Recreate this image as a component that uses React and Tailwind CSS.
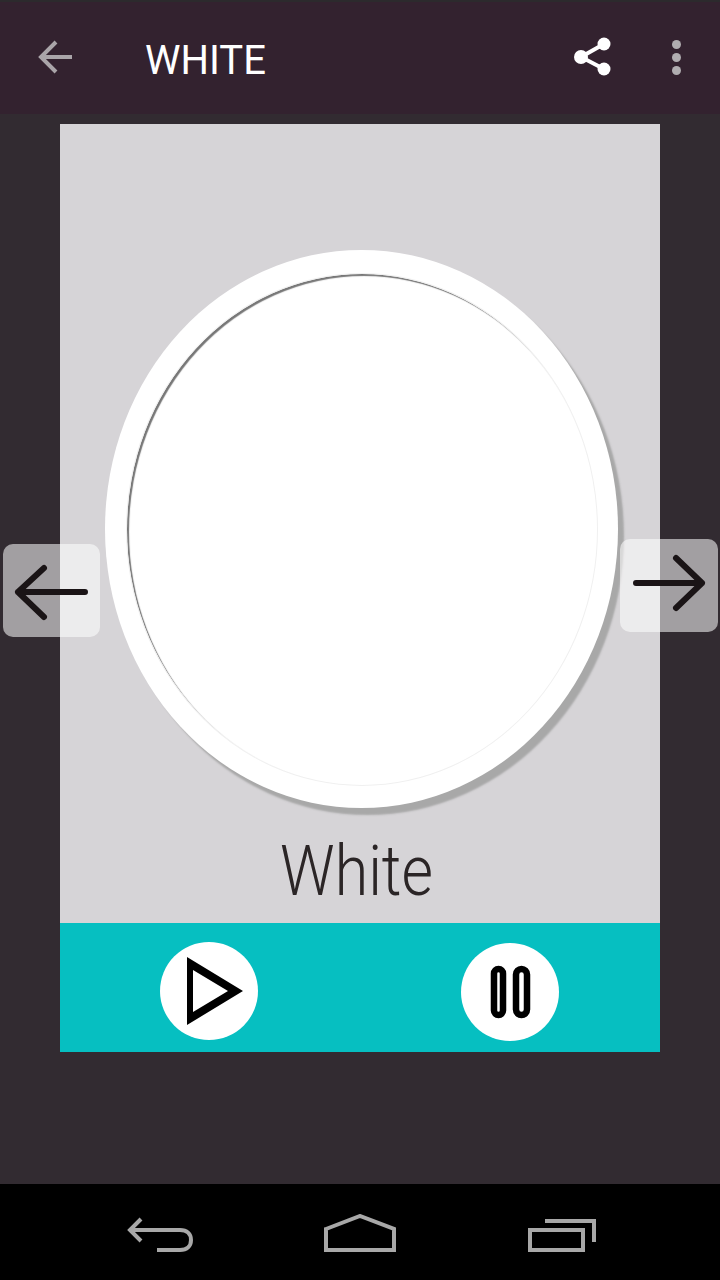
export default function App() {
  return (
    <div className="relative flex h-[1280px] w-[720px] flex-col overflow-hidden bg-[#322b31] font-['Roboto',sans-serif]">
      {/* Action bar */}
      <header className="flex h-[114px] shrink-0 items-center border-t-2 border-[#2c2a2d] bg-[#33222f] pl-[38px] pr-[39px]">
        <svg width="36" height="36" viewBox="0 0 36 36" fill="none" stroke="#aaa5a9" strokeWidth="4" className="mt-[-2px]">
          <path d="M34 18H5M18 3L3 18l15 15" />
        </svg>
        <h1 className="ml-[71px] mt-[5px] flex-1 text-[40px] font-normal leading-none text-white">WHITE</h1>
        <svg width="40" height="42" viewBox="0 0 40 42" fill="white" className="mr-[58px] mt-[-2px]">
          <path d="M30 8L7 21l23 12" fill="none" stroke="white" strokeWidth="4" />
          <circle cx="30" cy="8" r="6.5" />
          <circle cx="7" cy="21" r="7" />
          <circle cx="30" cy="33" r="6.5" />
        </svg>
        <div className="mt-[-2px] flex flex-col gap-[4px]">
          <span className="h-[9px] w-[9px] rounded-full bg-[#b0adb0]" />
          <span className="h-[9px] w-[9px] rounded-full bg-[#b0adb0]" />
          <span className="h-[9px] w-[9px] rounded-full bg-[#b0adb0]" />
        </div>
      </header>

      {/* Colour card */}
      <main className="relative flex-1 pt-[10px]">
        <div className="mx-auto flex h-[928px] w-[600px] flex-col bg-[#d6d4d7]">
          <div className="flex-1 pl-[45px] pt-[126px]">
            <div className="h-[558px] w-[513px] rounded-[50%] bg-white pl-[21px] pt-[23px] shadow-[6px_7px_2px_#a8a8a8]">
              <div className="h-[513px] w-[472px] rounded-[50%] border border-[#f0f0f0] shadow-[inset_2px_2px_1px_#777777]" />
            </div>
            <p className="ml-[-52px] mt-[28px] scale-x-[0.87] text-center text-[70px] font-light leading-none text-[#2b2526]">White</p>
          </div>
          <div className="flex h-[129px] items-center bg-[#06bfc1] pl-[100px] pt-[7px]">
            <button className="h-[98px] w-[98px] rounded-full bg-white">
              <svg width="98" height="98" viewBox="0 0 98 98">
                <path fillRule="evenodd" d="M27 15L83 49 27 83ZM33 28V70L68 49Z" fill="#000" />
              </svg>
            </button>
            <button className="ml-[203px] mt-[2px] h-[98px] w-[98px] rounded-full bg-white">
              <svg width="98" height="98" viewBox="0 0 98 98" fill="none" stroke="#000" strokeWidth="6.5">
                <rect x="33" y="26" width="9" height="46" rx="4.5" />
                <rect x="55" y="26" width="11" height="46" rx="5.5" />
              </svg>
            </button>
          </div>
        </div>

        {/* Prev / next overlays */}
        <button className="absolute left-[3px] top-[430px] h-[93px] w-[97px] rounded-[10px] bg-white/55 blur-[0.6px]">
          <svg width="97" height="93" viewBox="0 0 97 93" fill="none" stroke="#1a1416" strokeWidth="6" strokeLinecap="round" strokeLinejoin="round">
            <path d="M82 48H15M41 24L15 48l26 25" />
          </svg>
        </button>
        <button className="absolute left-[620px] top-[425px] h-[93px] w-[98px] rounded-[10px] bg-white/55 blur-[0.6px]">
          <svg width="98" height="93" viewBox="0 0 98 93" fill="none" stroke="#1a1416" strokeWidth="6" strokeLinecap="round" strokeLinejoin="round">
            <path d="M16 44H82M56 19l26 25-26 25" />
          </svg>
        </button>
      </main>

      {/* Android nav bar */}
      <footer className="flex h-[96px] shrink-0 items-start bg-black pl-[127px] pt-[30px]">
        <svg width="67" height="38" viewBox="0 0 67 38" fill="none" stroke="#a8a8a8" strokeWidth="4">
          <path d="M14 5L3 16l11 11M3 16H53c7 0 11 4 11 10s-4 10-11 10H30" />
        </svg>
        <svg width="72" height="38" viewBox="0 0 72 38" fill="none" stroke="#a8a8a8" strokeWidth="4" className="ml-[130px]">
          <path d="M2 15L36 2l34 13V36H2Z" />
        </svg>
        <svg width="68" height="38" viewBox="0 0 68 38" fill="none" stroke="#a8a8a8" strokeWidth="4" className="ml-[132px]">
          <path d="M17 7H66V28" />
          <rect x="2" y="16" width="53" height="20" />
        </svg>
      </footer>
    </div>
  );
}
